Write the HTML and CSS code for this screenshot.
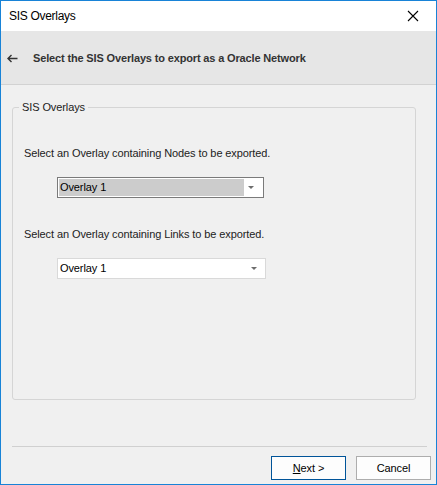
FILE: index.html
```html
<!DOCTYPE html>
<html>
<head>
<meta charset="utf-8">
<link rel="stylesheet" href="styles.css">
</head>
<body>
<div class="window">
  <div class="titlebar">
    <span class="title">SIS Overlays</span>
    <svg class="close" width="12" height="12" viewBox="0 0 12 12"><path d="M1 1 L11 11 M11 1 L1 11" stroke="#000" stroke-width="1.1" fill="none"/></svg>
  </div>
  <div class="header">
    <svg class="back" width="11" height="9" viewBox="0 0 11 9"><path d="M1 4.5 H10.5 M4.5 1 L1 4.5 L4.5 8" stroke="#333" stroke-width="1.4" fill="none"/></svg>
    <span class="heading">Select the SIS Overlays to export as a Oracle Network</span>
  </div>
  <div class="content">
    <div class="group">
      <span class="legend">SIS Overlays</span>
      <div class="label first">Select an Overlay containing Nodes to be exported.</div>
      <div class="combo focused">
        <span class="combo-text">Overlay 1</span>
        <span class="arrow"></span>
      </div>
      <div class="label second">Select an Overlay containing Links to be exported.</div>
      <div class="combo wide">
        <span class="combo-text">Overlay 1</span>
        <span class="arrow"></span>
      </div>
    </div>
    <div class="separator"></div>
    <div class="buttons">
      <button class="btn default"><u>N</u>ext &gt;</button>
      <button class="btn">Cancel</button>
    </div>
  </div>
</div>
</body>
</html>
```

FILE: styles.css
```css
html, body {
  margin: 0;
  padding: 0;
}
body {
  font-family: "Liberation Sans", Arial, sans-serif;
  font-size: 11px;
  letter-spacing: -0.1px;
  color: #000;
}
.window {
  width: 437px;
  height: 485px;
  box-sizing: border-box;
  border: 1px solid #1883d7;
  background: #f0f0f0;
  display: flex;
  flex-direction: column;
}
.titlebar {
  height: 30px;
  background: #fff;
  display: flex;
  align-items: center;
  justify-content: space-between;
  padding: 0 17px 0 8px;
}
.title {
  font-size: 12px;
  letter-spacing: -0.3px;
  color: #000;
}
.close {
  display: block;
}
.header {
  height: 53px;
  background: #e6e6e6;
  border-bottom: 1px solid #d2d2d2;
  display: flex;
  align-items: center;
  padding-left: 6px;
}
.back {
  display: block;
  margin-top: 1px;
}
.heading {
  margin-left: 15px;
  font-weight: bold;
  font-size: 11px;
  letter-spacing: -0.15px;
  color: #333;
  margin-top: 1px;
}
.content {
  flex: 1;
  padding: 22px 0 0 11px;
  display: flex;
  flex-direction: column;
}
.group {
  position: relative;
  width: 404px;
  height: 293px;
  box-sizing: border-box;
  border: 1px solid #d5d5d5;
  border-radius: 3px;
  padding: 38px 0 0 11px;
}
.legend {
  position: absolute;
  top: -8px;
  left: 6px;
  padding: 0 3px;
  background: #f0f0f0;
  color: #222;
  line-height: 15px;
}
.label {
  line-height: 15px;
  color: #222;
}
.combo {
  margin: 16px 0 0 33px;
  width: 207px;
  height: 21px;
  box-sizing: border-box;
  border: 1px solid #d9d9d9;
  background: #fff;
  display: flex;
  align-items: center;
  justify-content: space-between;
}
.combo.focused {
  border-color: #7a7a7a;
  padding: 1px;
}
.combo.focused .combo-text {
  background: #cccccc;
  width: 184px;
  height: 17px;
  line-height: 17px;
  padding-left: 1px;
}
.combo.wide {
  width: 209px;
}
.combo-text {
  padding-left: 2px;
  line-height: 19px;
  color: #000;
}
.arrow {
  width: 0;
  height: 0;
  border-left: 3px solid transparent;
  border-right: 3px solid transparent;
  border-top: 3px solid #6d6d6d;
  margin-right: 8px;
}
.label.second {
  margin-top: 29px;
}
.separator {
  margin-top: 46px;
  width: 415px;
  height: 1px;
  background: #d0d0d0;
}
.buttons {
  margin-top: 9px;
  display: flex;
  gap: 10px;
  padding-left: 259px;
}
.btn {
  width: 75px;
  height: 24px;
  box-sizing: border-box;
  border: 1px solid #adadad;
  background: #fdfdfd;
  font-family: "Liberation Sans", Arial, sans-serif;
  font-size: 11px;
  letter-spacing: -0.1px;
  color: #000;
  padding: 0;
  margin: 0;
}
.btn.default {
  border: 1px solid #005499;
}
```
